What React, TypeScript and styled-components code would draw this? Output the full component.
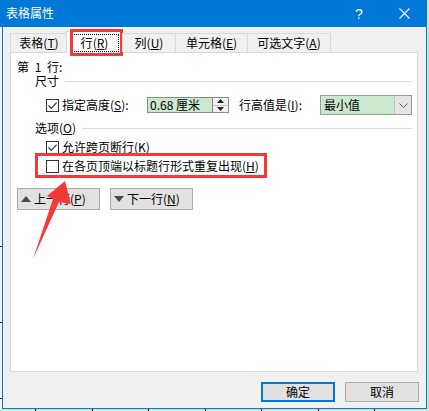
import styled, { createGlobalStyle } from "styled-components";

const GlobalStyle = createGlobalStyle`
  html, body {
    margin: 0;
    padding: 0;
    background: #cce8cf;
  }
  body {
    font-family: "Noto Sans CJK SC", "Noto Sans", sans-serif;
    font-size: 12px;
    color: #000;
  }
  * {
    box-sizing: border-box;
  }
`;

const tabs = [
  { label: "表格", key: "T", width: 58 },
  { label: "行", key: "R", width: 56, active: true },
  { label: "列", key: "U", width: 54 },
  { label: "单元格", key: "E", width: 73 },
  { label: "可选文字", key: "A", width: 84 },
];

const Check = ({ checked }: { checked?: boolean }) => (
  <CheckBox>
    {checked && (
      <svg width="11" height="11" viewBox="0 0 11 11">
        <path d="M1.5 5.5 L4.3 8.3 L9.6 2.6" fill="none" stroke="#333" strokeWidth="1.2" />
      </svg>
    )}
  </CheckBox>
);

const App = () => {
  return (
    <>
      <GlobalStyle />
      <Screen>
        <TitleBar>
          <TitleText>表格属性</TitleText>
          <HelpButton>?</HelpButton>
          <CloseButton>
            <svg width="11" height="11" viewBox="0 0 11 11">
              <path d="M0.5 0.5 L10.5 10.5 M10.5 0.5 L0.5 10.5" stroke="#fff" strokeWidth="1.1" />
            </svg>
          </CloseButton>
        </TitleBar>

        <Middle>
          <LeftEdge>
            <EdgeTick />
            <EdgeTick />
            <EdgeTick />
          </LeftEdge>

          <DialogBody>
            <TabStrip>
              {tabs.map((t, i) => (
                <Tab key={t.key} $w={t.width} $active={t.active} $first={i === 0}>
                  {t.active ? (
                    <>
                      <FocusLabel>
                        {t.label}(<Key>{t.key}</Key>)
                      </FocusLabel>
                      <TabMark />
                    </>
                  ) : (
                    <span>
                      {t.label}(<Key>{t.key}</Key>)
                    </span>
                  )}
                </Tab>
              ))}
            </TabStrip>

            <Panel>
              <FirstLine>第 1 行:</FirstLine>

              <SectionHead>
                <span>尺寸</span>
                <Rule />
              </SectionHead>

              <SizeRow>
                <Check checked />
                <FieldLabel $w={85}>
                  指定高度(<Key>S</Key>):
                </FieldLabel>
                <NumberBox>0.68 厘米</NumberBox>
                <Spinner>
                  <SpinHalf>
                    <svg width="7" height="4" viewBox="0 0 7 4">
                      <polygon points="3.5,0 7,4 0,4" fill="#222" />
                    </svg>
                  </SpinHalf>
                  <SpinHalf>
                    <svg width="7" height="4" viewBox="0 0 7 4">
                      <polygon points="0,0 7,0 3.5,4" fill="#222" />
                    </svg>
                  </SpinHalf>
                </Spinner>
                <FieldLabel $w={81} $gap={10}>
                  行高值是(<Key>I</Key>):
                </FieldLabel>
                <Select>
                  <SelectValue>最小值</SelectValue>
                  <SelectArrow>
                    <svg width="9" height="5" viewBox="0 0 9 5">
                      <path d="M0.5 0.5 L4.5 4.5 L8.5 0.5" fill="none" stroke="#606060" strokeWidth="1" />
                    </svg>
                  </SelectArrow>
                </Select>
              </SizeRow>

              <SectionHead $top={5}>
                <span>
                  选项(<Key>O</Key>)
                </span>
                <Rule />
              </SectionHead>

              <CheckRow $top={4}>
                <Check checked />
                <span>
                  允许跨页断行(<Key>K</Key>)
                </span>
              </CheckRow>

              <CheckRow $top={3}>
                <Check />
                <span>
                  在各页顶端以标题行形式重复出现(<Key>H</Key>)
                </span>
                <RowMark />
              </CheckRow>

              <NavRow>
                <NavButton>
                  <svg width="10" height="6" viewBox="0 0 10 6">
                    <polygon points="5,0 10,6 0,6" fill="#4a4a4a" />
                  </svg>
                  <span>
                    上一行(<Key>P</Key>)
                  </span>
                </NavButton>
                <NavButton>
                  <svg width="10" height="6" viewBox="0 0 10 6">
                    <polygon points="0,0 10,0 5,6" fill="#4a4a4a" />
                  </svg>
                  <span>
                    下一行(<Key>N</Key>)
                  </span>
                </NavButton>
              </NavRow>
            </Panel>

            <FooterRow>
              <DialogButton $primary>确定</DialogButton>
              <DialogButton>取消</DialogButton>
            </FooterRow>
          </DialogBody>
        </Middle>

        <BottomEdge>
          {[0, 1, 2, 3, 4, 5, 6].map((n) => (
            <BottomTick key={n} />
          ))}
        </BottomEdge>

        <Arrow width="50" height="90" viewBox="0 0 50 90">
          <polygon points="37,3 43,26 31,24 5,81 25,21 19,18" fill="#f23a3a" />
        </Arrow>
      </Screen>
    </>
  );
};
export default App;

const Screen = styled.div`
  position: relative;
  width: 429px;
  height: 411px;
  overflow: hidden;
  background: #cce8cf;
  display: flex;
  flex-direction: column;
`;

const TitleBar = styled.div`
  width: 427px;
  height: 27px;
  background: #0078d7;
  color: #fff;
  display: flex;
  align-items: center;
  padding-left: 6px;
`;

const TitleText = styled.div`
  flex: 1;
  font-size: 12px;
  line-height: 14px;
  margin-top: -1px;
`;

const HelpButton = styled.div`
  width: 44px;
  text-align: center;
  font-family: "Liberation Sans", sans-serif;
  font-size: 14px;
  line-height: 16px;
`;

const CloseButton = styled.div`
  width: 46px;
  display: flex;
  justify-content: center;
  align-items: center;
`;

const Middle = styled.div`
  display: flex;
  height: 382px;
`;

const LeftEdge = styled.div`
  width: 2px;
  background: #f2f2f2;
  display: flex;
  flex-direction: column;
  padding-top: 219px;
  gap: 75px;
`;

const EdgeTick = styled.div`
  width: 2px;
  height: 1px;
  background: #000;
`;

const DialogBody = styled.div`
  width: 425px;
  height: 382px;
  background: #f0f0f0;
  border: 1px solid #0078d7;
  border-top: none;
  padding: 4px 8px 0 7px;
  display: flex;
  flex-direction: column;
`;

const TabStrip = styled.div`
  height: 21px;
  display: flex;
  align-items: flex-end;
  position: relative;
  z-index: 1;
`;

const Tab = styled.div<{ $w: number; $active?: boolean; $first?: boolean }>`
  position: relative;
  width: ${(p) => p.$w}px;
  height: ${(p) => (p.$active ? 22 : 19)}px;
  margin-bottom: ${(p) => (p.$active ? -1 : 0)}px;
  margin-left: ${(p) => (p.$active ? -2 : p.$first ? 0 : -1)}px;
  margin-right: ${(p) => (p.$active ? 1 : 0)}px;
  background: ${(p) => (p.$active ? "#fff" : "#f0f0f0")};
  border: 1px solid #d9d9d9;
  border-bottom: none;
  display: flex;
  align-items: flex-start;
  justify-content: center;
  padding-top: ${(p) => (p.$active ? 3 : 2)}px;
  line-height: 14px;
  white-space: nowrap;
`;

const FocusLabel = styled.span`
  width: 46px;
  height: 16px;
  margin-left: 1px;
  outline: 1px dotted #000;
  display: flex;
  justify-content: center;
  align-items: center;
`;

const TabMark = styled.div`
  position: absolute;
  left: 3px;
  top: -3px;
  width: 53px;
  height: 27px;
  border: 3px solid #f23a3a;
`;

const Key = styled.u`
  text-decoration: underline;
  text-underline-offset: 1px;
`;

const Panel = styled.div`
  width: 408px;
  height: 320px;
  background: #fff;
  border: 1px solid #d9d9d9;
  padding: 7px 5px 0 6px;
  display: flex;
  flex-direction: column;
`;

const FirstLine = styled.div`
  height: 13px;
  line-height: 13px;
  word-spacing: 3px;
`;

const SectionHead = styled.div<{ $top?: number }>`
  height: 14px;
  margin-top: ${(p) => p.$top ?? 1}px;
  margin-left: 18px;
  display: flex;
  align-items: center;
  gap: 6px;
  line-height: 14px;
`;

const Rule = styled.div`
  flex: 1;
  height: 1px;
  background: #dcdcdc;
`;

const SizeRow = styled.div`
  height: 22px;
  margin-top: 6px;
  margin-left: 29px;
  display: flex;
  align-items: center;
`;

const CheckBox = styled.div`
  width: 13px;
  height: 13px;
  border: 1px solid #333;
  background: #fff;
  display: flex;
  align-items: center;
  justify-content: center;
  margin-right: 3px;
  flex-shrink: 0;
`;

const FieldLabel = styled.div<{ $w: number; $gap?: number }>`
  width: ${(p) => p.$w}px;
  margin-left: ${(p) => p.$gap ?? 0}px;
  white-space: nowrap;
  line-height: 14px;
`;

const NumberBox = styled.div`
  width: 66px;
  height: 16px;
  border: 1px solid #8a8a8a;
  background: #cce8cf;
  padding-left: 2px;
  line-height: 14px;
  white-space: nowrap;
`;

const Spinner = styled.div`
  width: 16px;
  height: 16px;
  border: 1px solid #8a8a8a;
  border-left: none;
  background: #f0f0f0;
  display: flex;
  flex-direction: column;
`;

const SpinHalf = styled.div`
  flex: 1;
  display: flex;
  align-items: center;
  justify-content: center;
  & + & {
    border-top: 1px solid #c8c8c8;
  }
`;

const Select = styled.div`
  width: 92px;
  height: 20px;
  border: 1px solid #9a9a9a;
  background: #cce8cf;
  display: flex;
`;

const SelectValue = styled.div`
  flex: 1;
  padding-left: 3px;
  line-height: 18px;
`;

const SelectArrow = styled.div`
  width: 17px;
  background: #e5e5e5;
  border-left: 1px solid #c4c4c4;
  display: flex;
  align-items: center;
  justify-content: center;
`;

const CheckRow = styled.div<{ $top: number }>`
  position: relative;
  height: 16px;
  margin-top: ${(p) => p.$top}px;
  margin-left: 29px;
  display: flex;
  align-items: center;
  line-height: 14px;
  white-space: nowrap;
`;

const RowMark = styled.div`
  position: absolute;
  left: -11px;
  top: -5px;
  width: 232px;
  height: 25px;
  border: 3px solid #f23a3a;
`;

const NavRow = styled.div`
  margin-top: 14px;
  display: flex;
  gap: 10px;
`;

const NavButton = styled.div`
  width: 83px;
  height: 22px;
  background: #e1e1e1;
  border: 1px solid #adadad;
  display: flex;
  align-items: center;
  gap: 3px;
  padding-left: 3px;
  line-height: 14px;
  white-space: nowrap;
`;

const FooterRow = styled.div`
  margin-top: 10px;
  margin-right: -1px;
  display: flex;
  justify-content: flex-end;
  gap: 10px;
`;

const DialogButton = styled.div<{ $primary?: boolean }>`
  width: 74px;
  height: 20px;
  background: #e1e1e1;
  border: ${(p) => (p.$primary ? "2px solid #0078d7" : "1px solid #adadad")};
  display: flex;
  align-items: center;
  justify-content: center;
  line-height: 14px;
`;

const BottomEdge = styled.div`
  height: 2px;
  background: #cce8cf;
  display: flex;
  padding-left: 35px;
  gap: 55.5px;
`;

const BottomTick = styled.div`
  width: 1px;
  height: 2px;
  background: #000;
`;

const Arrow = styled.svg`
  position: absolute;
  left: 28px;
  top: 178px;
`;
